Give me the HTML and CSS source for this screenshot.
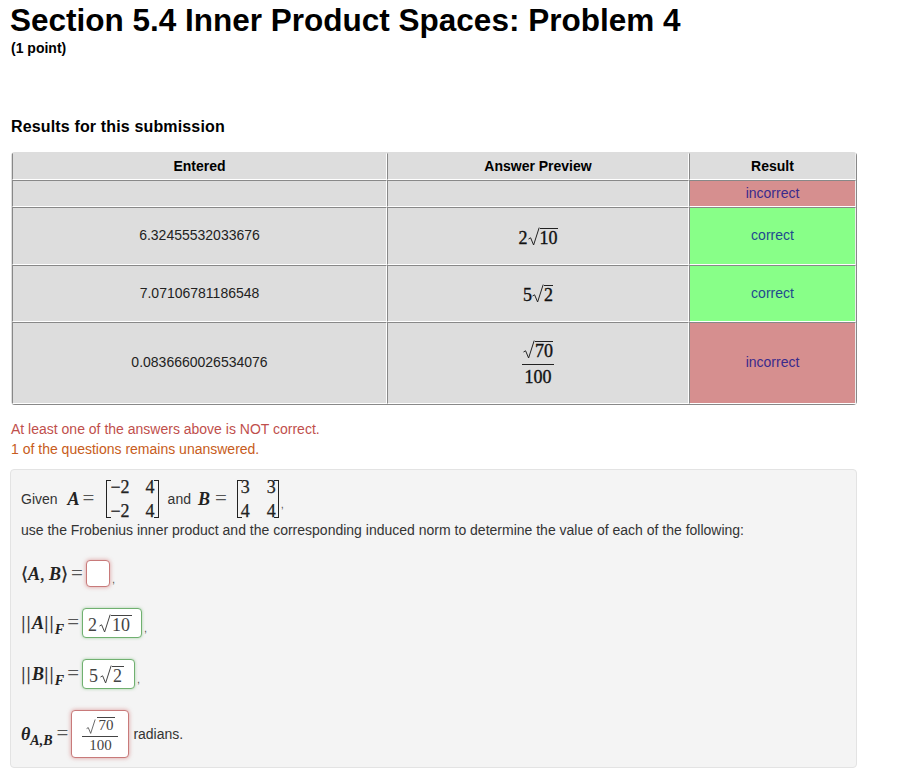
FILE: index.html
```html
<!DOCTYPE html>
<html lang="en">
<head>
<meta charset="utf-8">
<title>Section 5.4 Inner Product Spaces: Problem 4</title>
<link rel="stylesheet" href="styles.css">
</head>
<body>
<h1 class="title">Section 5.4 Inner Product Spaces: Problem 4</h1>
<div class="points">(1 point)</div>
<h2 class="results-title">Results for this submission</h2>
<table class="results">
  <colgroup><col class="c1"><col class="c2"><col class="c3"></colgroup>
  <tr class="r-head"><th>Entered</th><th>Answer Preview</th><th>Result</th></tr>
  <tr class="r-empty"><td></td><td></td><td class="bad">incorrect</td></tr>
  <tr class="r-a"><td>6.32455532033676</td><td><span class="math prev">2<span class="rad"><svg class="surd" viewBox="0 0 12 20"><path d="M0.5 12 L2.6 10.8 L5.6 18 L11.2 0.6"/></svg><span class="radicand">10</span></span></span></td><td class="good">correct</td></tr>
  <tr class="r-b"><td>7.07106781186548</td><td><span class="math prev">5<span class="rad"><svg class="surd" viewBox="0 0 12 20"><path d="M0.5 12 L2.6 10.8 L5.6 18 L11.2 0.6"/></svg><span class="radicand">2</span></span></span></td><td class="good">correct</td></tr>
  <tr class="r-c"><td>0.0836660026534076</td><td><span class="math prev frac"><span class="num"><span class="rad"><svg class="surd" viewBox="0 0 12 20"><path d="M0.5 12 L2.6 10.8 L5.6 18 L11.2 0.6"/></svg><span class="radicand">70</span></span></span><span class="den">100</span></span></td><td class="bad">incorrect</td></tr>
</table>
<div class="messages">
  <div class="msg-a">At least one of the answers above is NOT correct.</div>
  <div class="msg-b">1 of the questions remains unanswered.</div>
</div>
<div class="problem">
  <div class="line given">
    <span>Given</span>
    <span class="math var-a"><i>A</i><span class="eq">=</span></span>
    <span class="matrix m-a"><span>−2</span><span>4</span><span>−2</span><span>4</span></span>
    <span class="and">and</span>
    <span class="math var-b"><i>B</i><span class="eq">=</span></span>
    <span class="matrix m-b"><span>3</span><span>3</span><span>4</span><span>4</span></span>
    <span class="comma">,</span>
  </div>
  <div class="line instruction">use the Frobenius inner product and the corresponding induced norm to determine the value of each of the following:</div>
  <div class="line q1"><span class="math">⟨<i>A</i>, <i>B</i>⟩<span class="eq">=</span></span><span class="answer wrong empty"></span><span class="comma">,</span></div>
  <div class="line q2"><span class="math"><span class="bars">||</span><i>A</i><span class="bars">||</span><sub><i>F</i></sub><span class="eq">=</span></span><span class="answer right math a2">2<span class="rad"><svg class="surd" viewBox="0 0 12 20"><path d="M0.5 12 L2.6 10.8 L5.6 18 L11.2 0.6"/></svg><span class="radicand">10</span></span></span><span class="comma">,</span></div>
  <div class="line q3"><span class="math"><span class="bars">||</span><i>B</i><span class="bars">||</span><sub><i>F</i></sub><span class="eq">=</span></span><span class="answer right math a3">5<span class="rad"><svg class="surd" viewBox="0 0 12 20"><path d="M0.5 12 L2.6 10.8 L5.6 18 L11.2 0.6"/></svg><span class="radicand">2</span></span></span><span class="comma">,</span></div>
  <div class="line q4"><span class="math"><i class="theta">θ</i><sub><i>A,B</i></sub><span class="eq eq-wide">=</span></span><span class="answer wrong math a4"><span class="frac"><span class="num"><span class="rad"><svg class="surd" viewBox="0 0 12 20"><path d="M0.5 12 L2.6 10.8 L5.6 18 L11.2 0.6"/></svg><span class="radicand">70</span></span></span><span class="den">100</span></span></span><span class="unit">radians.</span></div>
</div>
</body>
</html>
```
FILE: styles.css
```css
html, body { margin: 0; padding: 0; background: #fff; }
body {
  font-family: "Liberation Sans", Arial, sans-serif;
  font-size: 14px;
  line-height: 20px;
  color: #333;
  padding: 0 48px 0 10px;
  height: 777px;
  overflow: hidden;
  box-sizing: border-box;
}
.title { margin: 0; padding-top: 1px; font-size: 31.5px; line-height: 38px; font-weight: 700; color: #000; }
.points { margin: 1px 0 0 1px; font-size: 14px; line-height: 16px; font-weight: 700; color: #000; }
.results-title { margin: 61px 0 0 1px; font-size: 16px; line-height: 20px; font-weight: 700; letter-spacing: .15px; color: #000; }

.results {
  margin: 15px 0 0 1px;
  width: 846px;
  table-layout: fixed;
  border-collapse: separate;
  border-spacing: 0;
  border: 1px solid #888;
  border-top-color: #ddd;
  border-left-color: #ddd;
  border-radius: 4px;
  background: #ddd;
}
.c1 { width: 375px; }
.c2 { width: 302px; }
.results th, .results td {
  padding: 0 0 2px;
  text-align: center;
  vertical-align: middle;
  background: #ddd;
  border: 1px solid;
  border-color: #888 #fff #fff #888;
  color: #222;
}
.results th { font-weight: 700; color: #000; border-top-color: #ddd; }
.results tr > :last-child { border-right-color: #eee; }
.r-head th { height: 23px; }
.r-empty td { height: 23px; }
.r-a td { height: 54px; }
.r-b td { height: 53px; }
.r-c td { height: 78px; }
.results .good { background: #8f8; color: #1f4a8f; }
.results .bad { background: #d68f8f; color: #3a2a8c; }

.math {
  font-family: "Liberation Serif", "Times New Roman", serif;
  font-size: 18px;
  color: #222;
  white-space: nowrap;
  -webkit-text-stroke: .25px currentColor;
}
.math sub { font-size: 14px; line-height: 0; }
.math i { font-weight: 700; -webkit-text-stroke: 0; }
.bars { letter-spacing: 1.6px; margin-left: .5px; }
.eq { font-size: 21px; line-height: 0; margin-left: 3px; color: #555; -webkit-text-stroke: 0; }
.eq-wide { margin-left: 4px; }
.var-b .eq { margin-left: 5px; }
.prev { font-size: 18px; color: #111; position: relative; top: 3px; -webkit-text-stroke: .35px currentColor; }
.rad { display: inline-block; position: relative; padding-left: 12px; }
.surd {
  position: absolute;
  left: 0;
  bottom: 1px;
  width: 12px;
  height: 20px;
  fill: none;
  stroke: #222;
  stroke-width: 1;
}
.radicand { display: inline-block; border-top: 1px solid #222; line-height: 18px; }
.frac { display: inline-flex; flex-direction: column; align-items: center; vertical-align: middle; }
.prev.frac { top: 2px; }
.num { padding: 0 1px 3px; border-bottom: 1px solid #222; }
.den { padding-top: 2px; line-height: 21px; }

.messages { margin: 14px 0 0 1px; line-height: 20px; }
.msg-a { color: #bf4f4c; }
.msg-b { color: #c75c20; }

.problem {
  margin-top: 10px;
  width: 847px;
  height: 299px;
  box-sizing: border-box;
  background: #f4f4f4;
  border: 1px solid #e3e3e3;
  border-radius: 4px;
  padding: 0 10px;
}
.line { display: flex; align-items: center; }
.given { height: 42px; margin-top: 8px; }
.instruction { height: 20px; margin-top: 0; }
.q1 { margin-top: 20px; height: 27px; }
.q2 { margin-top: 21px; height: 30px; }
.q3 { margin-top: 21px; height: 30px; }
.q4 { margin-top: 21px; height: 48px; }

.matrix {
  display: grid;
  grid-template-columns: auto auto;
  align-content: center;
  justify-items: end;
  height: 38px;
  box-sizing: border-box;
  font-family: "Liberation Serif", serif;
  font-size: 18px;
  line-height: 24px;
  -webkit-text-stroke: .25px currentColor;
  color: #222;
  border-left: 1px solid #222;
  border-right: 1px solid #222;
  position: relative;
}
.matrix::before, .matrix::after {
  content: "";
  position: absolute;
  top: 0;
  bottom: 0;
  width: 4px;
  border-top: 1px solid #222;
  border-bottom: 1px solid #222;
}
.matrix::before { left: 0; }
.matrix::after { right: 0; }
.m-a { margin-left: 12px; padding: 0 3px 0 3px; column-gap: 16px; }
.m-b { margin-left: 10px; padding: 0 2px 0 3px; column-gap: 17px; }
.comma { font-size: 11px; line-height: 14px; padding-top: 10px; margin-left: 2px; color: #555; }
.var-a { margin-left: 10px; }
.and { margin-left: 9px; }
.var-b { margin-left: 7px; }

.answer {
  display: inline-flex;
  align-items: center;
  justify-content: center;
  box-sizing: border-box;
  background: #fff;
  border: 1px solid #888;
  border-radius: 4px;
  margin-left: 3px;
  color: #444;
  -webkit-text-stroke: 0;
}
.answer .surd { stroke: #444; }
.answer .radicand, .answer .num { border-color: #444; }
.answer .rad { margin-left: 2px; }
.answer .radicand { padding: 0 2px 0 1px; }
.wrong { border-color: #c87a7a; box-shadow: 0 0 4px rgba(200, 80, 80, .55); }
.right { border-color: #70b070; box-shadow: 0 0 3px rgba(80, 170, 80, .5); }
.empty { width: 24px; height: 27px; }
.a2 { width: 60px; height: 30px; padding: 3px 4px 0 0; }
.a3 { width: 53px; height: 30px; padding: 3px 4px 0 0; }
.a4 { width: 58px; height: 48px; font-size: 15px; }
.a4 .rad { margin-left: 0; }
.a4 .radicand { line-height: 15px; }
.a4 .surd { height: 16px; bottom: 0; }
.a4 .num { padding: 0 3px 1px; }
.a4 .den { padding: 0; line-height: 17px; }
.unit { margin-left: 4px; }
```
